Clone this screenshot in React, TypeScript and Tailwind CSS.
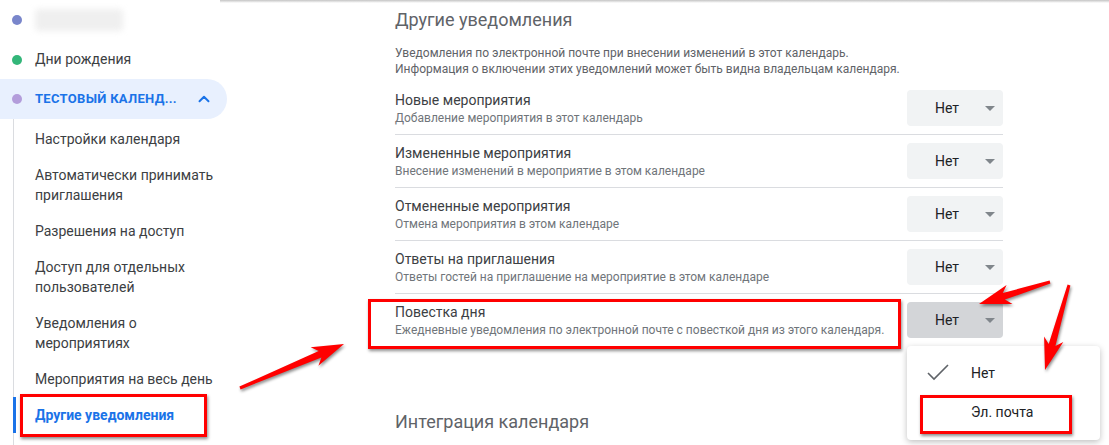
import { ChevronUp } from "lucide-react";

const font = { fontFamily: "Roboto, 'Noto Sans', sans-serif" };

const subItems: { label: string[]; active?: boolean }[] = [
  { label: ["Настройки календаря"] },
  { label: ["Автоматически принимать", "приглашения"] },
  { label: ["Разрешения на доступ"] },
  { label: ["Доступ для отдельных", "пользователей"] },
  { label: ["Уведомления о", "мероприятиях"] },
  { label: ["Мероприятия на весь день"] },
  { label: ["Другие уведомления"], active: true },
];

const rows = [
  { title: "Новые мероприятия", sub: "Добавление мероприятия в этот календарь" },
  { title: "Измененные мероприятия", sub: "Внесение изменений в мероприятие в этом календаре" },
  { title: "Отмененные мероприятия", sub: "Отмена мероприятия в этом календаре" },
  { title: "Ответы на приглашения", sub: "Ответы гостей на приглашение на мероприятие в этом календаре" },
  {
    title: "Повестка дня",
    sub: "Ежедневные уведомления по электронной почте с повесткой дня из этого календаря.",
    open: true,
  },
];

function Caret() {
  return (
    <svg width="10" height="5" viewBox="0 0 10 5">
      <path d="M0 0 L10 0 L5 5 Z" fill="#80868b" />
    </svg>
  );
}

function Select({ open }: { open?: boolean }) {
  return (
    <div
      className={`flex items-center w-[96px] h-[36px] rounded-[4px] pl-[28px] pr-[8px] text-[14px] text-[#202124] ${
        open ? "bg-[#d3d5d8]" : "bg-[#f1f3f4]"
      }`}
    >
      <span>Нет</span>
      <span className="ml-auto flex">
        <Caret />
      </span>
    </div>
  );
}

// arrow polygon from tail to tip
function arrowPoints(x1: number, y1: number, x2: number, y2: number) {
  const dx = x2 - x1;
  const dy = y2 - y1;
  const len = Math.hypot(dx, dy);
  const ux = dx / len;
  const uy = dy / len;
  const nx = -uy;
  const ny = ux;
  const head = 32;
  const hw = 10;
  const bx = x2 - ux * head;
  const by = y2 - uy * head;
  const pts = [
    [x1 + nx * 1.5, y1 + ny * 1.5],
    [bx + ux * 6 + nx * 3.5, by + uy * 6 + ny * 3.5],
    [bx + nx * hw, by + ny * hw],
    [x2, y2],
    [bx - nx * hw, by - ny * hw],
    [bx + ux * 6 - nx * 3.5, by + uy * 6 - ny * 3.5],
    [x1 - nx * 1.5, y1 - ny * 1.5],
  ];
  return pts.map((p) => `${p[0].toFixed(1)},${p[1].toFixed(1)}`).join(" ");
}

function RedBox({ className }: { className: string }) {
  return (
    <div
      className={`absolute border-[3px] border-[#ff0000] shadow-[1px_2px_3px_rgba(0,0,0,0.45)] pointer-events-none ${className}`}
    />
  );
}

export default function App() {
  return (
    <div className="relative w-[1109px] h-[445px] overflow-hidden bg-white flex" style={font}>
      {/* header shadow */}
      <div className="absolute top-0 left-[220px] right-0 h-[3px] bg-gradient-to-b from-[#c4c4c4] to-transparent" />

      {/* sidebar */}
      <aside className="w-[256px] shrink-0 flex flex-col">
        <div className="flex items-center h-[40px] pl-[12px]">
          <span className="w-[10px] h-[10px] rounded-full bg-[#7986cb]" />
          <span className="ml-[13px] w-[88px] h-[22px] rounded bg-[#efefef] blur-[3px]" />
        </div>
        <div className="flex items-center h-[39px] pl-[12px]">
          <span className="w-[10px] h-[10px] rounded-full bg-[#33b679]" />
          <span className="ml-[13px] text-[14px] text-[#3c4043]">Дни рождения</span>
        </div>
        <div className="flex items-center h-[40px] w-[227px] pl-[12px] pr-[14px] bg-[#e8f0fe] rounded-r-full">
          <span className="w-[10px] h-[10px] rounded-full bg-[#b39ddb]" />
          <span className="ml-[13px] text-[13px] font-bold tracking-[0.3px] text-[#1a73e8]">
            ТЕСТОВЫЙ КАЛЕНД...
          </span>
          <ChevronUp className="ml-auto text-[#1a73e8]" size={18} strokeWidth={2.6} />
        </div>
        <div className="ml-[13px] pt-[2px] border-l border-[#dadce0] flex-1 flex flex-col">
          {subItems.map((it) => (
            <div
              key={it.label[0]}
              className={`py-[8px] pl-[19px] text-[14px] leading-[20px] -ml-px border-l-[3px] ${
                it.active
                  ? "border-[#1a73e8] text-[#1a73e8] font-bold"
                  : "border-transparent text-[#3c4043]"
              }`}
            >
              {it.label.map((l) => (
                <div key={l}>{l}</div>
              ))}
            </div>
          ))}
        </div>
      </aside>

      {/* main */}
      <main className="ml-[139px] w-[608px] pt-[6px] flex flex-col">
        <h1 className="text-[18px] leading-[28px] text-[#5f6368]">Другие уведомления</h1>
        <p className="mt-[11px] text-[12px] leading-[16px] text-[#5f6368]">
          Уведомления по электронной почте при внесении изменений в этот календарь.
          <br />
          Информация о включении этих уведомлений может быть видна владельцам календаря.
        </p>
        <div className="mt-[5px] flex flex-col">
          {rows.map((r, i) => (
            <div
              key={r.title}
              className={`flex items-center py-[8px] ${
                i < rows.length - 1 ? "border-b border-[#dadce0]" : ""
              }`}
            >
              <div className="flex-1">
                <div className="text-[14px] leading-[20px] text-[#3c4043]">{r.title}</div>
                <div className="text-[12px] leading-[16px] text-[#70757a]">{r.sub}</div>
              </div>
              <Select open={r.open} />
            </div>
          ))}
        </div>
        <h2 className="mt-[62px] text-[18px] leading-[28px] text-[#5f6368]">Интеграция календаря</h2>
      </main>

      {/* open menu */}
      <div className="absolute left-[907px] top-[346px] w-[193px] pt-[8px] pb-[8px] bg-white rounded-[4px] shadow-[0_2px_6px_rgba(0,0,0,0.25)] text-[14px] text-[#202124]">
        <div className="flex items-center h-[38px]">
          <svg width="22" height="18" viewBox="0 0 22 18" className="ml-[20px]">
            <path d="M1 9 L7 15 L21 1" fill="none" stroke="#5f6368" strokeWidth="1.6" />
          </svg>
          <span className="ml-[22px]">Нет</span>
        </div>
        <div className="flex items-center h-[40px] pl-[64px]">Эл. почта</div>
      </div>

      {/* annotations */}
      <RedBox className="left-[20px] top-[394px] w-[187px] h-[43px]" />
      <RedBox className="left-[368px] top-[299px] w-[533px] h-[50px]" />
      <RedBox className="left-[920px] top-[395px] w-[152px] h-[39px]" />
      <svg
        className="absolute inset-0 pointer-events-none"
        width="1109"
        height="445"
        style={{ filter: "drop-shadow(1px 2px 1.5px rgba(0,0,0,0.45))" }}
      >
        <polygon points={arrowPoints(240, 388, 344, 344)} fill="#ff0000" />
        <polygon points={arrowPoints(1050, 282, 979, 304)} fill="#ff0000" />
        <polygon points={arrowPoints(1069, 285, 1045, 370)} fill="#ff0000" />
      </svg>
    </div>
  );
}
